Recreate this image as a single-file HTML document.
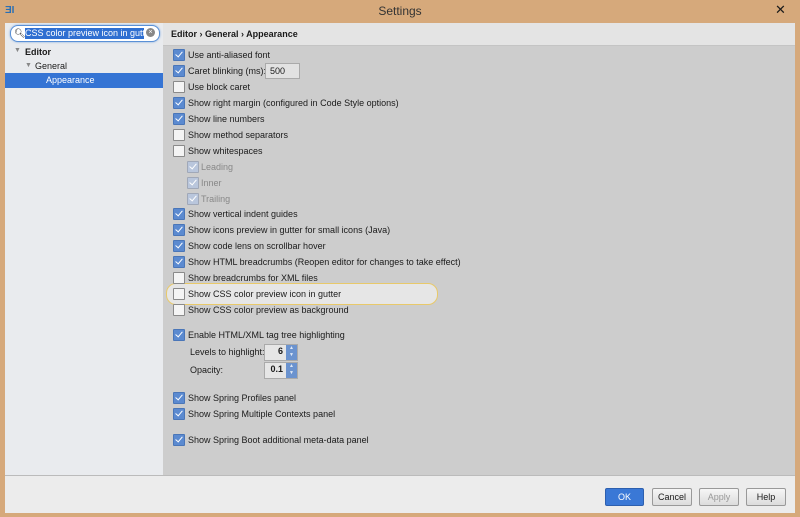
<!DOCTYPE html><html><head><style>
body{margin:0;width:800px;height:517px;background:#d6a97b;font-family:"Liberation Sans",sans-serif;font-size:9px;color:#1a1a1a;position:relative;overflow:hidden}
.a{position:absolute}
.title{left:0;top:0;width:800px;height:22px;text-align:center;line-height:22px;font-size:12px;color:#333}
.left{left:5px;top:23px;width:158px;height:452px;background:#e9ebee}
.right{left:163px;top:23px;width:632px;height:452px;background:#cdcdcd}
.hdr{left:163px;top:23px;width:632px;height:22px;background:#e4e4e4;border-bottom:1px solid #c4c4c4}
.bot{left:5px;top:475px;width:790px;height:37px;background:#ececec;border-top:1px solid #bbb}
.cb{position:absolute;left:173px;width:10px;height:10px;border:1px solid #8a8a8a;background:#f4f4f4;border-radius:1px}
.cb.c{background:#5b8ad0;border-color:#4a76b8}
.cb.c:after{content:"";position:absolute;left:3px;top:0px;width:3px;height:6px;border:solid #fff;border-width:0 1.5px 1.5px 0;transform:rotate(40deg)}
.cb.d{background:#b9c6dc;border-color:#a0a8b8}
.lb{position:absolute;left:188px;line-height:12px;white-space:nowrap}
.g{color:#888}
.btn{position:absolute;top:488px;height:16px;border:1px solid #999;background:linear-gradient(#f6f6f6,#dcdcdc);border-radius:2px;text-align:center;line-height:16px;font-size:9px}
.sp{position:absolute;left:264px;width:32px;height:15px;border:1px solid #aaa;background:#e6e6e6}
.sp b{position:absolute;right:0;top:0;width:11px;height:15px;background:#6b93cf;color:#dfe8f6;font-size:5px;line-height:7px;text-align:center;font-weight:normal}
.sp span{position:absolute;right:14px;top:1px;font-weight:bold}
</style></head><body>
<div class="a title">Settings</div>
<div class="a" style="left:5px;top:5px;color:#2a6fb5;font-weight:bold;font-size:10px">ƎI</div>
<div class="a" style="left:775px;top:2px;font-size:13px">✕</div>
<div class="a left"></div>
<div class="a right"></div>
<div class="a hdr"></div>
<div class="a bot"></div>
<div class="a" style="left:10px;top:25px;width:148px;height:15px;border:1px solid #5a90d6;border-radius:8px;background:#fff;box-shadow:0 0 2px #7aa7e0"></div>
<div class="a" style="left:14px;top:28px;font-size:9px">🔍︎</div>
<div class="a" style="left:25px;top:28px;width:119px;height:11px;background:#2f6fd1;color:#fff;line-height:11px;overflow:hidden;white-space:nowrap">CSS color preview icon in gutter</div>
<div class="a" style="left:146px;top:28px;width:9px;height:9px;border-radius:50%;background:#888;color:#fff;font-size:7px;line-height:9px;text-align:center">×</div>
<div class="a" style="left:14px;top:47px;font-size:7px;color:#888">▼</div>
<div class="a" style="left:25px;top:47px;font-weight:bold">Editor</div>
<div class="a" style="left:25px;top:62px;font-size:7px;color:#888">▼</div>
<div class="a" style="left:35px;top:61px">General</div>
<div class="a" style="left:5px;top:73px;width:158px;height:15px;background:#3574d4"></div>
<div class="a" style="left:46px;top:75px;color:#fff">Appearance</div>
<div class="a" style="left:171px;top:29px;font-weight:bold">Editor › General › Appearance</div>
<div class="a" style="left:166px;top:283px;width:270px;height:20px;border:1px solid #e8c96a;border-radius:10px;background:#e6e6e6"></div>
<div class="cb c" style="top:49px"></div><div class="lb" style="top:49px">Use anti-aliased font</div>
<div class="cb c" style="top:65px"></div><div class="lb" style="top:65px">Caret blinking (ms):</div>
<div class="a" style="left:265px;top:63px;width:29px;height:14px;border:1px solid #aaa;background:#e2e2e2;line-height:14px;padding-left:4px">500</div>
<div class="cb" style="top:81px"></div><div class="lb" style="top:81px">Use block caret</div>
<div class="cb c" style="top:97px"></div><div class="lb" style="top:97px">Show right margin (configured in Code Style options)</div>
<div class="cb c" style="top:113px"></div><div class="lb" style="top:113px">Show line numbers</div>
<div class="cb" style="top:129px"></div><div class="lb" style="top:129px">Show method separators</div>
<div class="cb" style="top:145px"></div><div class="lb" style="top:145px">Show whitespaces</div>
<div class="cb c d" style="top:161px;left:187px"></div><div class="lb g" style="top:161px;left:201px">Leading</div>
<div class="cb c d" style="top:177px;left:187px"></div><div class="lb g" style="top:177px;left:201px">Inner</div>
<div class="cb c d" style="top:193px;left:187px"></div><div class="lb g" style="top:193px;left:201px">Trailing</div>
<div class="cb c" style="top:208px"></div><div class="lb" style="top:208px">Show vertical indent guides</div>
<div class="cb c" style="top:224px"></div><div class="lb" style="top:224px">Show icons preview in gutter for small icons (Java)</div>
<div class="cb c" style="top:240px"></div><div class="lb" style="top:240px">Show code lens on scrollbar hover</div>
<div class="cb c" style="top:256px"></div><div class="lb" style="top:256px">Show HTML breadcrumbs (Reopen editor for changes to take effect)</div>
<div class="cb" style="top:272px"></div><div class="lb" style="top:272px">Show breadcrumbs for XML files</div>
<div class="cb" style="top:288px"></div><div class="lb" style="top:288px">Show CSS color preview icon in gutter</div>
<div class="cb" style="top:304px"></div><div class="lb" style="top:304px">Show CSS color preview as background</div>
<div class="cb c" style="top:329px"></div><div class="lb" style="top:329px">Enable HTML/XML tag tree highlighting</div>
<div class="lb" style="top:346px;left:190px">Levels to highlight:</div>
<div class="sp" style="top:344px"><span>6</span><b>▲<br>▼</b></div>
<div class="lb" style="top:364px;left:190px">Opacity:</div>
<div class="sp" style="top:362px"><span>0.1</span><b>▲<br>▼</b></div>
<div class="cb c" style="top:392px"></div><div class="lb" style="top:392px">Show Spring Profiles panel</div>
<div class="cb c" style="top:408px"></div><div class="lb" style="top:408px">Show Spring Multiple Contexts panel</div>
<div class="cb c" style="top:434px"></div><div class="lb" style="top:434px">Show Spring Boot additional meta-data panel</div>
<div class="btn" style="left:605px;width:37px;background:#3a78d6;border-color:#2d5fae;color:#fff">OK</div>
<div class="btn" style="left:652px;width:38px">Cancel</div>
<div class="btn" style="left:699px;width:38px;color:#999">Apply</div>
<div class="btn" style="left:746px;width:38px">Help</div>
</body></html>
